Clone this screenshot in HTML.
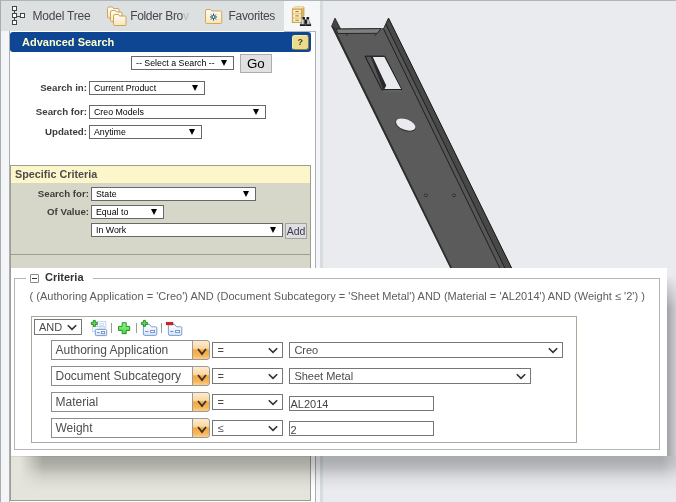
<!DOCTYPE html>
<html lang="en">
<head>
<meta charset="utf-8">
<title>Advanced Search</title>
<style>
html,body{margin:0;padding:0;}
body{width:676px;height:502px;overflow:hidden;position:relative;background:#e9ebef;font-family:"Liberation Sans",Arial,sans-serif;}
.abs{position:absolute;}
#page{position:absolute;left:0;top:0;width:676px;height:502px;overflow:hidden;will-change:transform;}
/* tab bar */
#tabbar{left:0;top:0;width:320px;height:31px;background:#dce0e0;}
#topline{left:0;top:0;width:676px;height:1px;background:#adb7b7;}
#leftline{left:0;top:0;width:1px;height:502px;background:#a9acad;}
.tabtxt{position:absolute;top:8.7px;font-size:12px;line-height:15px;color:#4a4350;white-space:pre;}
#acttab{left:284px;top:1px;width:36px;height:30px;background:#f6f7f9;}
#strip{left:1px;top:31px;width:319px;height:471px;background:#f3f5f8;}
#vdiv{left:320px;top:1px;width:2.500px;height:501px;background:#d7dddd;}
/* panel */
#panel{left:9px;top:31px;width:305px;height:471px;background:#fff;border-left:1px solid #adadad;border-right:1px solid #adadad;}
#hdr{left:10px;top:32px;width:301px;height:20px;background:#0e4694;border-radius:3px;}
#hdr span{position:absolute;left:12px;top:4px;font-weight:bold;font-size:11px;line-height:13px;color:#ffffcc;white-space:pre;}
#help{left:292px;top:35px;width:14.500px;height:12.500px;background:#eadb8e;border:1px solid;border-color:#f6ecb0 #8f7f38 #8f7f38 #f6ecb0;border-radius:3px;box-sizing:content-box;font-size:9px;font-weight:bold;line-height:12.500px;text-align:center;color:#4a3a20;}
.lbl{position:absolute;font-weight:bold;font-size:9.7px;line-height:12px;color:#3d3d3d;text-align:right;white-space:pre;}
.osel{position:absolute;box-sizing:border-box;border:1px solid #686868;background:#fff;font-size:8.8px;line-height:11px;color:#000;white-space:pre;}
.osel span{position:absolute;left:4px;top:1px;}
.osel i{position:absolute;right:6px;top:3px;width:0;height:0;border-left:3px solid transparent;border-right:3px solid transparent;border-top:6px solid #000;}
.btn{position:absolute;box-sizing:border-box;border:1px solid #adadad;background:#e1e1e1;color:#000;text-align:center;white-space:pre;}
/* specific criteria */
#sc{left:10px;top:165px;width:301px;height:336px;background:#d6d6c9;border:1px solid #9c9c90;box-sizing:border-box;}
#schead{left:11px;top:166px;width:299px;height:17px;background:#fdf6cb;}
#schead span{position:absolute;left:4px;top:2px;font-weight:bold;font-size:10.8px;line-height:13px;color:#4d4d4d;white-space:pre;}
#scline{left:11px;top:254px;width:299px;height:1px;background:#9c9c90;}
#sclow{left:11px;top:457px;width:299px;height:43px;background:#e4e4dc;}
/* overlay */
#ov{left:11px;top:267.500px;width:656px;height:188.500px;background:#fff;}
#shb{left:10px;top:456px;width:666px;height:36px;background:linear-gradient(to bottom,rgba(0,0,0,.27) 0,rgba(0,0,0,.26) 5px,rgba(0,0,0,.20) 12px,rgba(0,0,0,.11) 18px,rgba(0,0,0,.05) 24px,rgba(0,0,0,.015) 30px,rgba(0,0,0,0) 35px);-webkit-mask-image:linear-gradient(to right,transparent 10px,#000 33px,#000 652px,rgba(0,0,0,.6) 666px);mask-image:linear-gradient(to right,transparent 10px,#000 33px,#000 652px,rgba(0,0,0,.6) 666px);}
#shr{left:667px;top:267px;width:9px;height:189px;background:linear-gradient(to right,rgba(0,0,0,.31),rgba(0,0,0,.13));-webkit-mask-image:linear-gradient(to bottom,transparent 8px,rgba(0,0,0,.5) 24px,#000 42px);mask-image:linear-gradient(to bottom,transparent 8px,rgba(0,0,0,.5) 24px,#000 42px);}
#fs{left:14px;top:278px;width:646px;height:172px;box-sizing:border-box;border:1px solid #b5b5b5;}
#legend{left:26px;top:270px;width:67px;height:16px;background:#fff;}
#minus{left:30px;top:274px;width:9px;height:9px;box-sizing:border-box;border:1px solid #8a8a8a;border-radius:1px;background:#fff;}
#minus i{position:absolute;left:1px;top:3px;width:5px;height:1px;background:#333;}
#legtxt{left:45px;top:270px;font-size:11px;font-weight:bold;line-height:14px;color:#333;white-space:pre;}
#expr{letter-spacing:0.015px;left:29.5px;top:289.200px;font-size:11px;line-height:14px;color:#5c5c5c;white-space:pre;}
#grp{left:31px;top:316px;width:546px;height:127px;box-sizing:border-box;border:1px solid #a9a99c;}
.msel{position:absolute;box-sizing:border-box;border:1px solid #767676;background:#fff;color:#4a4a4a;font-size:11px;line-height:13px;white-space:pre;}
.msel span{position:absolute;left:4.400px;top:0.5px;}
.msel svg{position:absolute;right:4.500px;top:4px;}
.combo{position:absolute;box-sizing:border-box;border:1px solid #8c8c8c;background:#fff;color:#4e4e4e;font-size:12px;line-height:16px;white-space:pre;height:20px;width:142px;left:51px;}
.combo span{position:absolute;left:3.5px;top:0.5px;}
.cbtn{position:absolute;box-sizing:border-box;left:192px;width:18px;height:20px;border:1px solid #9a9a9a;border-radius:0 3px 3px 0;background:linear-gradient(#fdeccf 0%,#fbd9a4 40%,#f8a73a 52%,#f9b557 80%,#fcd08c 100%);}
.cbtn svg{position:absolute;left:3.5px;top:6.5px;}
.inp{position:absolute;box-sizing:border-box;border:1px solid #767676;background:#fff;color:#444;font-size:11px;line-height:13px;white-space:pre;left:289px;width:145px;height:15px;}
.inp span{position:absolute;left:0.5px;top:1.700px;}
.sep{position:absolute;top:323px;width:1px;height:9.500px;background:#9c9c9c;}
</style>
</head>
<body>
<div id="page">
<!-- 3D viewport -->
<svg class="abs" style="left:323px;top:0" width="353" height="502" viewBox="323 0 353 502">
  <!-- floor -->
  <polygon points="331.500,26.600 336.200,28.500 381,28.200 384,27.700 388.500,18.100 512.600,270 451.200,270" fill="#5b5b5b"/>
  <!-- left flange -->
  <polygon points="331.500,26.600 335,18.100 340.400,28.500 336.500,29.500" fill="#444" stroke="#262626" stroke-width="0.800" stroke-linejoin="round"/>
  <!-- end band -->
  <polygon points="336.300,29 381,28.600 377.300,33.300 337.800,33.500" fill="#7f7f7f" stroke="#1e1e1e" stroke-width="0.900" stroke-linejoin="round"/>
  <path d="M346.500 34v1.300h1.500M376 34v1.300h-1.500" stroke="#2a2a2a" stroke-width="0.700" fill="none"/>
  <!-- right wall bands -->
  <polygon points="383.300,28.500 384,27.700 388.500,18.100 512.600,270 500.800,270" fill="#575757"/>
  <polygon points="385.800,24 388.500,18.100 512.600,270 505.800,270" fill="#484848"/>
  <line x1="383.300" y1="28.500" x2="500.800" y2="270" stroke="#1a1a1a" stroke-width="0.900"/>
  <line x1="385.800" y1="24" x2="505.800" y2="270" stroke="#1a1a1a" stroke-width="0.900"/>
  <line x1="388.500" y1="18.100" x2="512.600" y2="270" stroke="#1c1c1c" stroke-width="1"/>
  <line x1="388.500" y1="18.100" x2="384" y2="27.700" stroke="#262626" stroke-width="0.900"/>
  <!-- left edge -->
  <polygon points="331.500,26.600 334.200,27.500 453,270 451.200,270" fill="#2c2c2c"/>
  <!-- rect cutout -->
  <polygon points="365,56.200 384.700,56.200 401.700,89.600 382,89.900" fill="#565656" stroke="#161616" stroke-width="1" stroke-linejoin="round"/>
  <line x1="383" y1="90.900" x2="401" y2="90.700" stroke="#808080" stroke-width="0.600"/>
  <polygon points="370.600,56.700 372.800,56.900 386.300,85.500 384.300,89.400 383.200,89.500" fill="#2a2a2a"/>
  <polygon points="372.900,57 384.300,57 401,89.100 384.500,89.100 386.300,85.500" fill="#e9ebef"/>
  <!-- ellipse hole -->
  <ellipse cx="405.600" cy="125" rx="10.800" ry="6" transform="rotate(20 405.600 125)" fill="#333"/>
  <ellipse cx="405.700" cy="124.600" rx="10.200" ry="5.300" transform="rotate(20 405.700 124.600)" fill="#e9ebef"/>
  <!-- small holes -->
  <ellipse cx="425.900" cy="195.300" rx="1.700" ry="1.300" fill="#666" stroke="#1e1e1e" stroke-width="0.700"/>
  <ellipse cx="454" cy="195.300" rx="1.700" ry="1.300" fill="#666" stroke="#1e1e1e" stroke-width="0.700"/>
</svg>

<!-- left chrome -->
<div id="tabbar" class="abs"></div>
<div id="acttab" class="abs"></div>
<div id="strip" class="abs"></div>
<div id="vdiv" class="abs"></div>
<div id="topline" class="abs"></div>
<div id="leftline" class="abs"></div>

<!-- tabs -->
<svg class="abs" style="left:10px;top:4px" width="18" height="24" viewBox="0 0 18 24">
  <g fill="none" stroke="#444" stroke-width="1">
    <path d="M4.5 7v13M7 12.5h4"/>
    <rect x="2.5" y="2.5" width="4" height="4" fill="#fff"/>
    <rect x="2.5" y="9.5" width="4" height="4" fill="#fff"/>
    <rect x="2.5" y="16.5" width="4" height="4" fill="#fff"/>
    <rect x="10.5" y="9.5" width="4" height="4" fill="#fff"/>
  </g>
</svg>
<span class="tabtxt" style="left:32.5px;letter-spacing:-0.2px">Model Tree</span>
<svg class="abs" style="left:106px;top:5px" width="22" height="22" viewBox="0 0 22 22">
  <defs><linearGradient id="fold" x1="0" x2="0" y1="0" y2="1"><stop offset="0" stop-color="#fffdf6"/><stop offset="1" stop-color="#fae6b4"/></linearGradient></defs><g stroke="#caa55e" stroke-width="1" fill="url(#fold)">
    <path d="M1.5 3.5q0-1.5 1.5-1.5h3.5l1 1.5h4.5q1 0 1 1v7.5q0 1-1 1h-9.500q-1 0-1-1z"/>
    <path d="M4.500 7q0-1.500 1.500-1.500h3.500l1 1.500h4.500q1 0 1 1v7.500q0 1-1 1h-9.500q-1 0-1-1z"/>
    <path d="M7.500 11q0-1.500 1.500-1.500h3.500l1 1.500h5.500q1 0 1 1v7.500q0 1-1 1h-10.500q-1 0-1-1z"/>
  </g>
</svg>
<span class="tabtxt" style="left:130.2px;letter-spacing:-0.33px">Folder Bro<span style="color:#b9bcc0">v</span></span>
<svg class="abs" style="left:204px;top:8px" width="20" height="17" viewBox="0 0 20 17">
  <path d="M1.500 3q0-1.500 1.500-1.500h3.500l1.200 1.500h9q1 0 1 1v10.500q0 1-1 1h-14.200q-1 0-1-1z" fill="url(#fold)" stroke="#cfa85e" stroke-width="1"/>
  <g stroke="#0f4c7c" stroke-width="1"><path d="M9.500 5.500v7M6 9h7M7 6.500l5 5M12 6.500l-5 5"/></g>
  <circle cx="9.500" cy="9" r="1.400" fill="#fdf3dc" stroke="#1f5f8f" stroke-width="0.8"/>
</svg>
<span class="tabtxt" style="left:228.6px;letter-spacing:-0.33px">Favorites</span>
<svg class="abs" style="left:284px;top:0px" width="36" height="31" viewBox="284 0 36 31">
  <defs>
    <linearGradient id="bar" x1="0" x2="1" y1="0" y2="0"><stop offset="0" stop-color="#555"/><stop offset=".45" stop-color="#d8d8d8"/><stop offset="1" stop-color="#4a4a4a"/></linearGradient>
  </defs>
  <!-- cabinet -->
  <path d="M292.500 9l2.500-2h9v9l-2.500 2z" fill="#d9b56a" stroke="#c9a253" stroke-width="0.800"/>
  <path d="M292.500 9l2.500-2h9l-2.500 2z" fill="#f7e3ad"/>
  <rect x="292.300" y="9" width="9.400" height="13.600" fill="#e6c272" stroke="#c39a4a" stroke-width="0.800"/>
  <rect x="293.300" y="10" width="7.400" height="3.200" fill="#fdf0cc"/>
  <rect x="293.300" y="14.300" width="7.400" height="3.200" fill="#fdf0cc"/>
  <rect x="293.300" y="18.600" width="7.400" height="3.200" fill="#fdf0cc"/>
  <rect x="295.300" y="11.100" width="3.600" height="1" fill="#96763a"/>
  <rect x="295.300" y="15.400" width="3.600" height="1" fill="#96763a"/>
  <rect x="295.300" y="19.700" width="3.600" height="1" fill="#96763a"/>
  <!-- binoculars -->
  <path d="M302.600 19.300h2.400l.700 5.200h-5.700z" fill="url(#bar)"/>
  <path d="M306.600 19.300h2.400l2 5.200h-5.100z" fill="url(#bar)"/>
  <rect x="302.400" y="16.900" width="2.600" height="2.600" rx=".5" fill="#1a1a1a"/>
  <rect x="306.500" y="16.900" width="2.600" height="2.600" rx=".5" fill="#1a1a1a"/>
  <rect x="304.600" y="19.600" width="2.300" height="4.200" fill="#1a1a1a"/>
  <path d="M299.900 24.300h5.900v1.100q0 .5-.5.500h-4.900q-.5 0-.5-.5z" fill="#1a1a1a"/>
  <path d="M305.800 24.300h5.300v1.100q0 .5-.5.500h-4.300q-.5 0-.5-.5z" fill="#1a1a1a"/>
</svg>

<!-- panel -->
<div id="panel" class="abs"></div>
<div class="abs" style="left:284px;top:31px;width:31px;height:1px;background:#b4b6b8"></div>
<div id="hdr" class="abs"><span>Advanced Search</span></div>
<div id="help" class="abs">?</div>

<div class="osel" style="left:131px;top:56px;width:103px;height:14px"><span>-- Select a Search --</span><i></i></div>
<div class="btn" style="left:240px;top:54px;width:31.700px;height:18.700px;font-size:13.33px;line-height:17px">Go</div>

<div class="lbl" style="left:20px;width:67px;top:82px">Search in:</div>
<div class="osel" style="left:89px;top:81px;width:116px;height:14px"><span>Current Product</span><i></i></div>
<div class="lbl" style="left:20px;width:67px;top:106px">Search for:</div>
<div class="osel" style="left:89px;top:105px;width:177px;height:14px"><span>Creo Models</span><i></i></div>
<div class="lbl" style="left:20px;width:67px;top:125.500px">Updated:</div>
<div class="osel" style="left:89px;top:125px;width:113px;height:14px"><span>Anytime</span><i></i></div>

<!-- specific criteria -->
<div id="sc" class="abs"></div>
<div id="schead" class="abs"><span>Specific Criteria</span></div>
<div class="lbl" style="left:22px;width:67px;top:187.500px">Search for:</div>
<div class="osel" style="left:91px;top:187px;width:165px;height:14px"><span>State</span><i></i></div>
<div class="lbl" style="left:22px;width:67px;top:205.500px">Of Value:</div>
<div class="osel" style="left:91px;top:205px;width:73px;height:14px"><span>Equal to</span><i></i></div>
<div class="osel" style="left:91px;top:223px;width:192px;height:14px"><span>In Work</span><i></i></div>
<div class="btn" style="left:285px;top:223px;width:22px;height:15.500px;font-size:10.500px;line-height:15px;color:#3a3a5a;border-color:#a2a2a2;background:#dedede">Add</div>
<div id="scline" class="abs"></div>
<div id="sclow" class="abs"></div>

<!-- overlay -->
<div id="shb" class="abs"></div>
<div id="shr" class="abs"></div>
<div id="ov" class="abs"></div>
<div id="fs" class="abs"></div>
<div id="legend" class="abs"></div>
<div id="minus" class="abs"><i></i></div>
<div id="legtxt" class="abs">Criteria</div>
<div id="expr" class="abs">( (Authoring Application = 'Creo') AND (Document Subcategory = 'Sheet Metal') AND (Material = 'AL2014') AND (Weight ≤ '2') )</div>
<div id="grp" class="abs"></div>

<div class="msel" style="left:34px;top:319px;width:48px;height:16px"><span style="left:4px">AND</span>
  <svg width="10" height="7" viewBox="0 0 10 7"><path d="M.8 1.200l4.200 4.200 4.200-4.200" fill="none" stroke="#333" stroke-width="1.600"/></svg></div>

<!-- toolbar icons -->
<svg class="abs" style="left:88px;top:318px" width="98" height="20" viewBox="88 318 98 20">
  <defs>
    <linearGradient id="cardg" x1="0" x2="0" y1="0" y2="1"><stop offset="0" stop-color="#ffffff"/><stop offset="1" stop-color="#d9e6f7"/></linearGradient>
    <linearGradient id="plusg" x1="0" x2="0" y1="0" y2="1"><stop offset="0" stop-color="#93f58c"/><stop offset="1" stop-color="#4fd945"/></linearGradient>
  </defs>
  <!-- icon 1 add group -->
  <rect x="97.400" y="321.400" width="8.400" height="6.600" fill="#f7fafe" stroke="#bccfe9" stroke-width="0.800"/>
  <rect x="100" y="323.400" width="3.600" height="2" fill="none" stroke="#c9d8ee" stroke-width="0.700"/>
  <rect x="92.600" y="326.400" width="11.400" height="5.200" fill="#f4f8fd" stroke="#bccfe9" stroke-width="0.800"/>
  <rect x="99" y="328" width="3" height="1.600" fill="none" stroke="#c3d4ec" stroke-width="0.700"/>
  <rect x="95.300" y="329.400" width="11.400" height="6.200" rx="1" fill="url(#cardg)" stroke="#6d8fc4" stroke-width="0.900"/>
  <path d="M97 332.600h2.600" stroke="#6a8fc6" stroke-width="1"/>
  <rect x="101.400" y="331.500" width="3.200" height="2.200" fill="#fff" stroke="#6a8fc6" stroke-width="0.900"/>
  <path d="M93.30000000000001 320.4h2v2h2v2h-2v2h-2v-2h-2v-2h2z" fill="#58e052" stroke="#0d7d12" stroke-width="0.800"/>
  <!-- icon 2 plus -->
  <path d="M122.200 322.700h4v3.700h3.500v4h-3.500v3.300h-4v-3.300h-3.700v-4h3.700z" fill="url(#plusg)" stroke="#108a12" stroke-width="0.900"/>
  <!-- icon 3 add row -->
  <path d="M143.4 326v-.6q0-1 1-1h5.200l2 2.400h4q1.200 0 1.200 1.200v6q0 1.400-1.400 1.400h-10.600q-1.400 0-1.400-1.400z" fill="url(#cardg)" stroke="#6d95cd" stroke-width="0.900"/><path d="M145.2 331.500h3.200" stroke="#6a8fc6" stroke-width="1"/><rect x="150.6" y="330.500" width="4" height="2" fill="#fff" stroke="#6a8fc6" stroke-width="0.900"/>
  <path d="M143.4 320.4h2v2h2v2h-2v2h-2v-2h-2v-2h2z" fill="#58e052" stroke="#0d7d12" stroke-width="0.800"/>
  <!-- icon 4 remove -->
  <path d="M168.4 326v-.6q0-1 1-1h5.200l2 2.400h4q1.200 0 1.200 1.200v6q0 1.400-1.400 1.400h-10.600q-1.400 0-1.400-1.400z" fill="url(#cardg)" stroke="#6d95cd" stroke-width="0.900"/><path d="M170.2 331.500h3.200" stroke="#6a8fc6" stroke-width="1"/><rect x="175.6" y="330.500" width="4" height="2" fill="#fff" stroke="#6a8fc6" stroke-width="0.900"/>
  <rect x="166.300" y="322.300" width="6.600" height="2.500" fill="#e21a1a" stroke="#b30f0f" stroke-width="0.700"/>
</svg>
<div class="sep" style="left:111px"></div>
<div class="sep" style="left:136px"></div>
<div class="sep" style="left:161px"></div>

<!-- rows -->
<div class="combo" style="top:340px"><span>Authoring Application</span></div>
<div class="cbtn" style="top:340px"><svg width="10" height="8" viewBox="0 0 10 8"><path d="M1 1l4 5 4-5" fill="none" stroke="#333" stroke-width="1.800"/></svg></div>
<div class="msel" style="left:212px;top:342px;width:71px;height:16px"><span>=</span><svg width="10" height="7" viewBox="0 0 10 7"><path d="M.8 1.200l4.200 4.200 4.200-4.200" fill="none" stroke="#333" stroke-width="1.600"/></svg></div>
<div class="msel" style="left:289px;top:342px;width:274px;height:16px"><span>Creo</span><svg width="10" height="7" viewBox="0 0 10 7"><path d="M.8 1.200l4.200 4.200 4.200-4.200" fill="none" stroke="#333" stroke-width="1.600"/></svg></div>

<div class="combo" style="top:366px"><span>Document Subcategory</span></div>
<div class="cbtn" style="top:366px"><svg width="10" height="8" viewBox="0 0 10 8"><path d="M1 1l4 5 4-5" fill="none" stroke="#333" stroke-width="1.800"/></svg></div>
<div class="msel" style="left:212px;top:368px;width:71px;height:16px"><span>=</span><svg width="10" height="7" viewBox="0 0 10 7"><path d="M.8 1.200l4.200 4.200 4.200-4.200" fill="none" stroke="#333" stroke-width="1.600"/></svg></div>
<div class="msel" style="left:289px;top:368px;width:242px;height:16px"><span>Sheet Metal</span><svg width="10" height="7" viewBox="0 0 10 7"><path d="M.8 1.200l4.200 4.200 4.200-4.200" fill="none" stroke="#333" stroke-width="1.600"/></svg></div>

<div class="combo" style="top:392px"><span>Material</span></div>
<div class="cbtn" style="top:392px"><svg width="10" height="8" viewBox="0 0 10 8"><path d="M1 1l4 5 4-5" fill="none" stroke="#333" stroke-width="1.800"/></svg></div>
<div class="msel" style="left:212px;top:394px;width:71px;height:16px"><span>=</span><svg width="10" height="7" viewBox="0 0 10 7"><path d="M.8 1.200l4.200 4.200 4.200-4.200" fill="none" stroke="#333" stroke-width="1.600"/></svg></div>
<div class="inp" style="top:395.500px"><span>AL2014</span></div>

<div class="combo" style="top:418px"><span>Weight</span></div>
<div class="cbtn" style="top:418px"><svg width="10" height="8" viewBox="0 0 10 8"><path d="M1 1l4 5 4-5" fill="none" stroke="#333" stroke-width="1.800"/></svg></div>
<div class="msel" style="left:212px;top:420px;width:71px;height:16px"><span>≤</span><svg width="10" height="7" viewBox="0 0 10 7"><path d="M.8 1.200l4.200 4.200 4.200-4.200" fill="none" stroke="#333" stroke-width="1.600"/></svg></div>
<div class="inp" style="top:421px"><span>2</span></div>

</div>
</body>
</html>
